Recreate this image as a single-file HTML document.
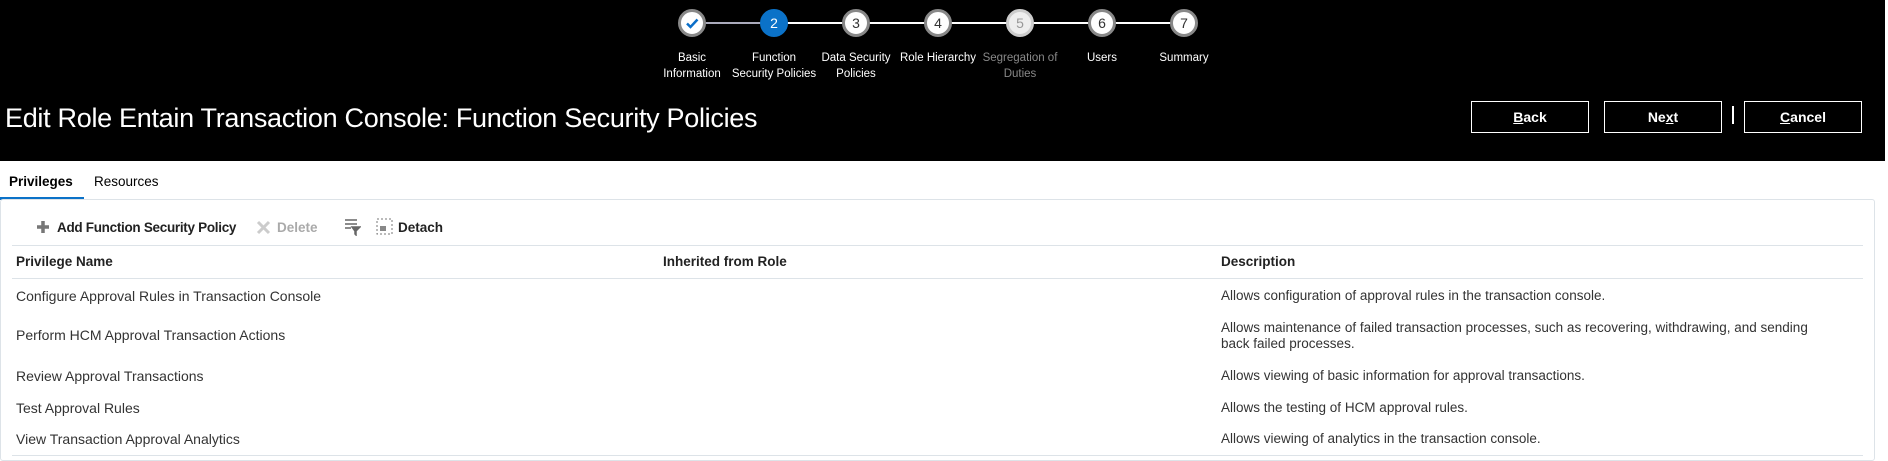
<!DOCTYPE html>
<html><head><meta charset="utf-8"><style>
*{margin:0;padding:0;box-sizing:border-box}
body{width:1888px;height:461px;background:#fff;font-family:"Liberation Sans",Arial,sans-serif;position:relative;overflow:hidden;color:#333}
.hdr{position:absolute;left:0;top:0;width:1885px;height:161px;background:#000}
.a{position:absolute;white-space:nowrap}
.line{position:absolute;height:2px;background:#fff;top:22px}
.c{position:absolute;width:28px;height:28px;border-radius:50%;background:#fff;border:3px solid #888;top:9px;color:#333;font-size:14px;text-align:center;line-height:22px}
.lbl{position:absolute;top:50px;width:110px;margin-left:-55px;text-align:center;color:#fff;font-size:11.5px;line-height:16px}
.btn{position:absolute;top:101px;width:118px;height:32px;border:1px solid #fff;color:#fff;font-weight:bold;font-size:14px;text-align:center;line-height:30px}
.t{position:absolute;font-size:13.5px;color:#333;white-space:nowrap}
.hl{position:absolute;left:12px;width:1851px;height:1px;background:#dde3e8}
</style></head><body>
<div class="hdr">
 <div class="line" style="left:692px;width:82px;background:#aab"></div>
 <div class="line" style="left:774px;width:408px"></div>
 <div class="c" style="left:678px;"><svg width="22" height="22" viewBox="0 0 22 22"><path d="M6 11.5l3.5 3.5 7-7.5" stroke="#0a6ec8" stroke-width="2.5" fill="none"/></svg></div>
 <div class="c" style="left:760px;background:#0b72c8;border-color:#0b72c8;color:#fff">2</div>
 <div class="c" style="left:842px">3</div>
 <div class="c" style="left:924px">4</div>
 <div class="c" style="left:1006px;background:#eee;border-color:#ccc;color:#999">5</div>
 <div class="c" style="left:1088px">6</div>
 <div class="c" style="left:1170px">7</div>
 <div class="lbl" style="left:692px">Basic<br>Information</div>
 <div class="lbl" style="left:774px">Function<br>Security Policies</div>
 <div class="lbl" style="left:856px">Data Security<br>Policies</div>
 <div class="lbl" style="left:938px">Role Hierarchy</div>
 <div class="lbl" style="left:1020px;color:#888">Segregation of<br>Duties</div>
 <div class="lbl" style="left:1102px">Users</div>
 <div class="lbl" style="left:1184px">Summary</div>
 <div class="a" style="left:5px;top:100px;color:#fff;font-size:27px;line-height:36px;letter-spacing:-0.3px">Edit Role Entain Transaction Console: Function Security Policies</div>
 <div class="btn" style="left:1471px"><u>B</u>ack</div>
 <div class="btn" style="left:1604px">Ne<u>x</u>t</div>
 <div class="a" style="left:1732px;top:106px;width:2px;height:18px;background:#fff"></div>
 <div class="btn" style="left:1744px"><u>C</u>ancel</div>
</div>
<div class="t" style="left:9px;top:174px;font-weight:bold;color:#000">Privileges</div>
<div class="t" style="left:94px;top:174px;color:#000">Resources</div>
<div class="a" style="left:0;top:197px;width:84px;height:3px;background:#0b72c8"></div>
<div class="a" style="left:0;top:199px;width:1875px;height:262px;border:1px solid #dde3e8;border-radius:3px"></div>
<svg class="a" style="left:36px;top:220px" width="14" height="14"><path d="M7 1v12M1 7h12" stroke="#777" stroke-width="3.5"/></svg>
<div class="t" style="left:57px;top:220px;font-weight:bold;color:#222;letter-spacing:-0.3px">Add Function Security Policy</div>
<svg class="a" style="left:256px;top:220px" width="15" height="15"><path d="M2 2l11 11M13 2L2 13" stroke="#ccc" stroke-width="3"/></svg>
<div class="t" style="left:277px;top:220px;color:#aaa;font-weight:bold">Delete</div>
<svg class="a" style="left:343px;top:218px" width="18" height="18"><path d="M2 2h12M2 6h12M2 10h6M9 9h8l-4 4v4l-1-1v-3z" stroke="#666" stroke-width="1.5" fill="#666"/></svg>
<svg class="a" style="left:376px;top:218px" width="17" height="17"><rect x="1" y="1" width="15" height="15" fill="none" stroke="#777" stroke-dasharray="2 2"/><rect x="4" y="8" width="6" height="5" fill="#888"/></svg>
<div class="t" style="left:398px;top:220px;font-weight:bold;color:#222">Detach</div>
<div class="hl" style="top:245px"></div>
<div class="t" style="left:16px;top:254px;font-weight:bold;color:#222">Privilege Name</div>
<div class="t" style="left:663px;top:254px;font-weight:bold;color:#222">Inherited from Role</div>
<div class="t" style="left:1221px;top:254px;font-weight:bold;color:#222">Description</div>
<div class="hl" style="top:278px"></div>
<div class="t" style="left:16px;top:288px;font-size:14px">Configure Approval Rules in Transaction Console</div>
<div class="t" style="left:16px;top:327px;font-size:14px">Perform HCM Approval Transaction Actions</div>
<div class="t" style="left:16px;top:368px;font-size:14px">Review Approval Transactions</div>
<div class="t" style="left:16px;top:400px;font-size:14px">Test Approval Rules</div>
<div class="t" style="left:16px;top:431px;font-size:14px">View Transaction Approval Analytics</div>
<div class="t" style="left:1221px;top:288px">Allows configuration of approval rules in the transaction console.</div>
<div class="t" style="left:1221px;top:320px;line-height:16px">Allows maintenance of failed transaction processes, such as recovering, withdrawing, and sending<br>back failed processes.</div>
<div class="t" style="left:1221px;top:368px">Allows viewing of basic information for approval transactions.</div>
<div class="t" style="left:1221px;top:400px">Allows the testing of HCM approval rules.</div>
<div class="t" style="left:1221px;top:431px">Allows viewing of analytics in the transaction console.</div>
<div class="hl" style="top:455px"></div>
</body></html>
